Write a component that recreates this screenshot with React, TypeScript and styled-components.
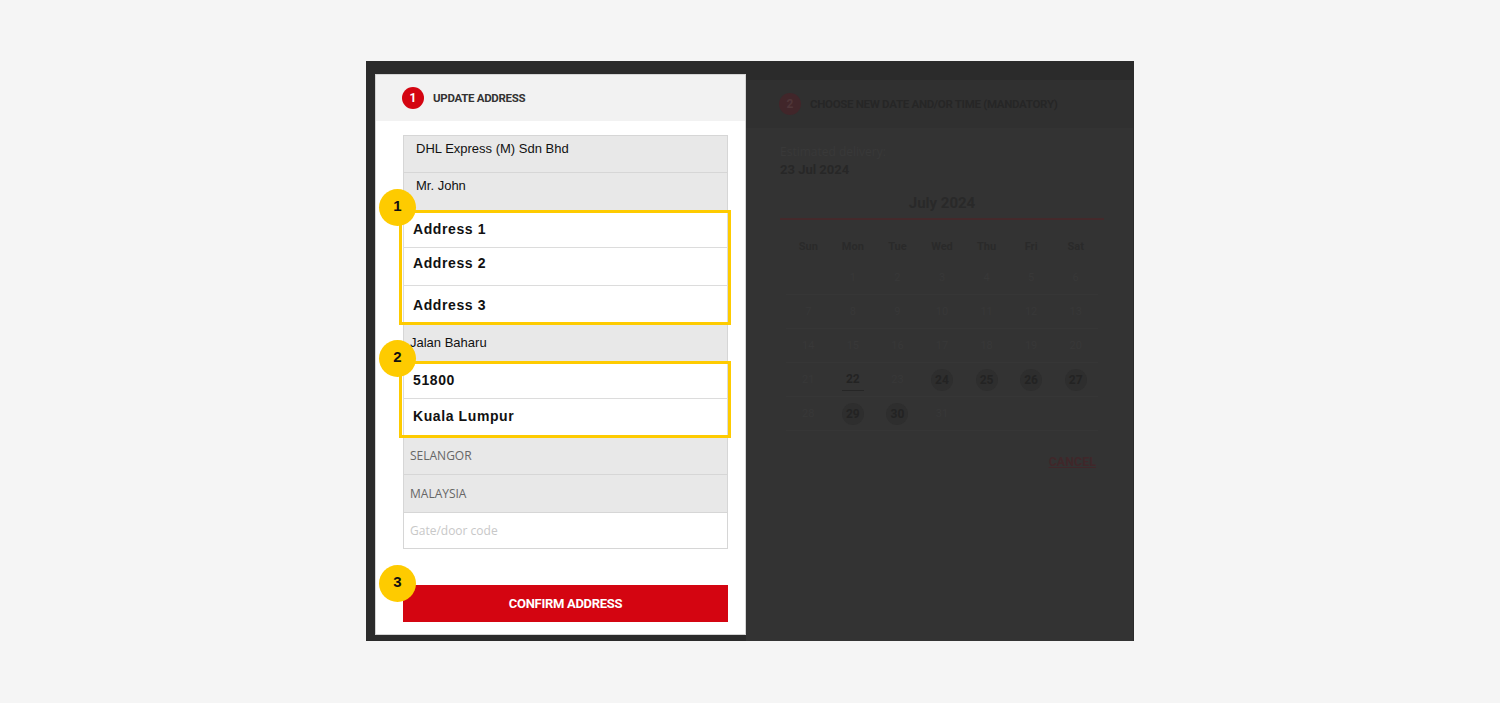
import React from 'react';
import styled, { createGlobalStyle } from 'styled-components';

const GlobalStyle = createGlobalStyle`
  html, body {
    margin: 0;
    padding: 0;
    background: #f5f5f5;
  }
  body {
    font-family: 'Liberation Sans', Arial, sans-serif;
  }
  * {
    box-sizing: border-box;
  }
`;

const Page = styled.div`
  width: 1500px;
  height: 703px;
  display: flex;
  justify-content: center;
  padding-top: 61px;
`;

const Frame = styled.div`
  width: 768px;
  height: 580px;
  background: #2b2b2b;
  display: flex;
  align-items: flex-start;
  padding: 13px 0 0 9px;
`;

const Card = styled.section`
  width: 371px;
  background: #fff;
  border: 1px solid #d4d4d4;
`;

const StepHeader = styled.header<{ $dim?: boolean }>`
  display: flex;
  align-items: center;
  gap: 9px;
  height: ${(p) => (p.$dim ? '48px' : '46px')};
  padding-left: ${(p) => (p.$dim ? '33px' : '26px')};
  background: ${(p) => (p.$dim ? '#303030' : '#f2f2f2')};
`;

const StepNumber = styled.span<{ $dim?: boolean }>`
  width: 22px;
  height: 22px;
  border-radius: 50%;
  display: flex;
  align-items: center;
  justify-content: center;
  background: ${(p) => (p.$dim ? '#41262a' : '#d40511')};
  color: ${(p) => (p.$dim ? '#4f3639' : '#fff')};
  font: 700 12px Roboto, sans-serif;
`;

const StepTitle = styled.h2<{ $dim?: boolean }>`
  margin: 0;
  font: 700 11.5px Roboto, sans-serif;
  letter-spacing: -0.3px;
  text-transform: uppercase;
  color: ${(p) => (p.$dim ? '#262626' : '#333')};
`;

const Fields = styled.div`
  padding: 14px 17px 12px 27px;
`;

type Variant = 'readonly' | 'edited' | 'select' | 'empty';

const Field = styled.div<{ $variant: Variant; $h: number; $top?: boolean; $lift?: number }>`
  height: ${(p) => p.$h}px;
  display: flex;
  align-items: ${(p) => (p.$top ? 'flex-start' : 'center')};
  padding: ${(p) =>
    p.$top ? '5px 12px 0' : p.$variant === 'edited' ? '0 9px' : '0 6px'};
  padding-bottom: ${(p) => (p.$lift ? `${p.$lift}px` : undefined)};
  border: 1px solid ${(p) => (p.$variant === 'edited' ? '#dcdcdc' : '#d6d6d6')};
  border-top: none;
  background: ${(p) =>
    p.$variant === 'edited' || p.$variant === 'empty' ? '#fff' : '#e8e8e8'};
  color: ${(p) =>
    p.$variant === 'select' ? '#666' : p.$variant === 'empty' ? '#c8c8c8' : '#111'};
  font-family: ${(p) =>
    p.$variant === 'select' || p.$variant === 'empty'
      ? "'Open Sans', sans-serif"
      : "'Liberation Sans', Arial, sans-serif"};
  font-size: ${(p) =>
    p.$variant === 'edited' ? '14px' : p.$variant === 'readonly' ? '13px' : '12px'};
  font-weight: ${(p) => (p.$variant === 'edited' ? 700 : 400)};
  letter-spacing: ${(p) => (p.$variant === 'edited' ? '0.6px' : '0')};
  &:first-child {
    border-top: 1px solid #d6d6d6;
  }
`;

const Highlight = styled.div`
  position: relative;
  &::after {
    content: '';
    position: absolute;
    inset: -1px -3px -1px -4px;
    border: 3px solid #fecb00;
    pointer-events: none;
  }
`;

const Badge = styled.span<{ $top?: number }>`
  position: absolute;
  z-index: 2;
  left: -24px;
  top: ${(p) => p.$top ?? -22}px;
  width: 37px;
  height: 37px;
  border-radius: 50%;
  background: #fecb00;
  color: #111;
  display: flex;
  align-items: center;
  justify-content: center;
  padding-bottom: 4px;
  font: 700 15px 'Liberation Sans', Arial, sans-serif;
`;

const ButtonWrap = styled.div`
  position: relative;
  margin-top: 36px;
`;

const ConfirmButton = styled.button`
  width: 325px;
  height: 37px;
  border: none;
  background: #d40511;
  color: #fff;
  font: 700 13px Roboto, sans-serif;
  letter-spacing: -0.3px;
  text-transform: uppercase;
`;

const DimPanel = styled.section`
  flex: 1;
  align-self: stretch;
  margin-top: 6px;
  margin-right: 1px;
  background: #333;
`;

const PanelBody = styled.div`
  padding: 0 29px 0 34px;
  font-family: Roboto, sans-serif;
`;

const Label = styled.div`
  margin-top: 16px;
  font: 400 12px 'Open Sans', sans-serif;
  line-height: 16px;
  color: #393939;
`;

const EstDate = styled.div`
  font: 700 13px Roboto, sans-serif;
  line-height: 18px;
  margin-top: 1px;
  color: #272727;
`;

const MonthTitle = styled.div`
  margin-top: 14px;
  text-align: center;
  font: 700 15px Roboto, sans-serif;
  line-height: 20px;
  color: #292929;
  padding-bottom: 5px;
  border-bottom: 2px solid #44292b;
`;

const Calendar = styled.div`
  margin: 0 6px;
`;

const WeekRow = styled.div<{ $head?: boolean }>`
  display: grid;
  grid-template-columns: repeat(7, 1fr);
  height: ${(p) => (p.$head ? '14px' : '34px')};
  margin-top: ${(p) => (p.$head ? '19px' : '0')};
  margin-bottom: ${(p) => (p.$head ? '8px' : '0')};
  border-bottom: ${(p) => (p.$head ? 'none' : '1px solid #363636')};
  align-items: center;
`;

const DayHead = styled.span`
  text-align: center;
  font: 700 11px Roboto, sans-serif;
  color: #2a2a2a;
`;

type DayState = 'off' | 'today' | 'open' | 'blank';

const Day = styled.span<{ $state: DayState }>`
  justify-self: center;
  width: 22px;
  height: 22px;
  display: flex;
  align-items: center;
  justify-content: center;
  border-radius: ${(p) => (p.$state === 'open' ? '50%' : '0')};
  background: ${(p) => (p.$state === 'open' ? '#2e2e2e' : 'transparent')};
  border-bottom: ${(p) => (p.$state === 'today' ? '1px solid #262626' : 'none')};
  font: ${(p) => (p.$state === 'off' ? '400 11px' : '700 12px')} Roboto, sans-serif;
  color: ${(p) => (p.$state === 'off' ? '#383838' : '#232323')};
`;

const CancelRow = styled.div`
  display: flex;
  justify-content: flex-end;
  margin-top: 23px;
  padding-right: 8px;
`;

const CancelLink = styled.a`
  font: 700 12.5px Roboto, sans-serif;
  color: #40272a;
  text-decoration: underline;
  text-transform: uppercase;
`;

const weeks: (number | null)[][] = [
  [null, 1, 2, 3, 4, 5, 6],
  [7, 8, 9, 10, 11, 12, 13],
  [14, 15, 16, 17, 18, 19, 20],
  [21, 22, 23, 24, 25, 26, 27],
  [28, 29, 30, 31, null, null, null],
];

const openDays = [24, 25, 26, 27, 29, 30];

function dayState(d: number | null): DayState {
  if (d === null) return 'blank';
  if (d === 22) return 'today';
  if (openDays.includes(d)) return 'open';
  return 'off';
}

export default function App() {
  return (
    <>
      <GlobalStyle />
      <Page>
        <Frame>
          <Card>
            <StepHeader>
              <StepNumber>1</StepNumber>
              <StepTitle>Update address</StepTitle>
            </StepHeader>
            <Fields>
              <Field $variant="readonly" $h={38} $top>
                DHL Express (M) Sdn Bhd
              </Field>
              <Field $variant="readonly" $h={38} $top>
                Mr. John
              </Field>
              <Highlight>
                <Badge>1</Badge>
                <Field $variant="edited" $h={37}>Address 1</Field>
                <Field $variant="edited" $h={38} $lift={8}>Address 2</Field>
                <Field $variant="edited" $h={38}>Address 3</Field>
              </Highlight>
              <Field $variant="readonly" $h={38}>Jalan Baharu</Field>
              <Highlight>
                <Badge>2</Badge>
                <Field $variant="edited" $h={37}>51800</Field>
                <Field $variant="edited" $h={38} $lift={4}>Kuala Lumpur</Field>
              </Highlight>
              <Field $variant="select" $h={38}>SELANGOR</Field>
              <Field $variant="select" $h={38}>MALAYSIA</Field>
              <Field $variant="empty" $h={36}>Gate/door code</Field>
              <ButtonWrap>
                <Badge $top={-20}>3</Badge>
                <ConfirmButton>Confirm address</ConfirmButton>
              </ButtonWrap>
            </Fields>
          </Card>

          <DimPanel>
            <StepHeader $dim>
              <StepNumber $dim>2</StepNumber>
              <StepTitle $dim>Choose new date and/or time (mandatory)</StepTitle>
            </StepHeader>
            <PanelBody>
              <Label>Estimated delivery:</Label>
              <EstDate>23 Jul 2024</EstDate>
              <MonthTitle>July 2024</MonthTitle>
              <Calendar>
                <WeekRow $head>
                  {['Sun', 'Mon', 'Tue', 'Wed', 'Thu', 'Fri', 'Sat'].map((d) => (
                    <DayHead key={d}>{d}</DayHead>
                  ))}
                </WeekRow>
                {weeks.map((week, i) => (
                  <WeekRow key={i}>
                    {week.map((d, j) => (
                      <Day key={j} $state={dayState(d)}>
                        {d ?? ''}
                      </Day>
                    ))}
                  </WeekRow>
                ))}
              </Calendar>
              <CancelRow>
                <CancelLink>Cancel</CancelLink>
              </CancelRow>
            </PanelBody>
          </DimPanel>
        </Frame>
      </Page>
    </>
  );
}
